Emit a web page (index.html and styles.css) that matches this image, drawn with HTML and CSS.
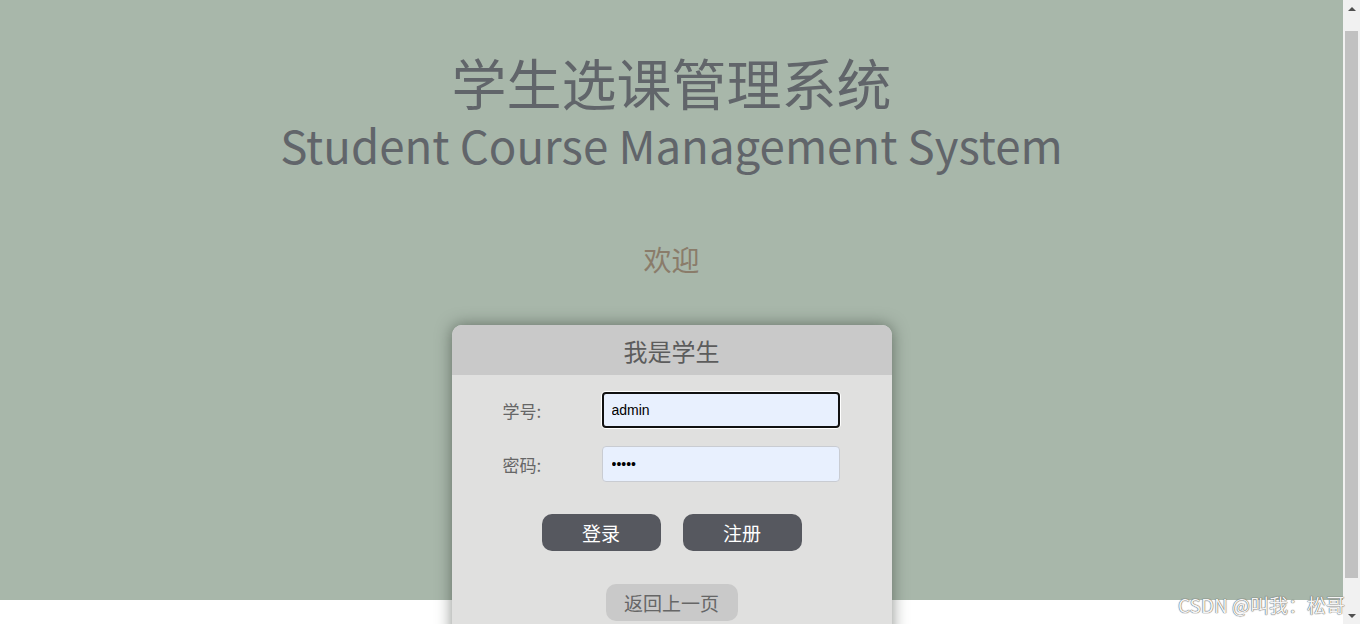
FILE: index.html
```html
<!DOCTYPE html>
<html>
  <head>
    <meta charset="utf-8">
    <link rel="stylesheet" href="styles.css">
  </head>
  <body>
    <div class="page">
      <div class="stage">
        <h1 class="title">
          <span class="title-cn">学生选课管理系统</span>
          <span class="title-en">Student Course Management System</span>
        </h1>
        <p class="welcome">欢迎</p>

        <div class="card">
          <div class="card-head">我是学生</div>
          <div class="card-body">
            <div class="row">
              <label class="label">学号:</label>
              <input class="field focused" type="text" value="admin">
            </div>
            <div class="row">
              <label class="label">密码:</label>
              <input class="field" type="password" value="admin">
            </div>
            <div class="actions">
              <button class="btn">登录</button>
              <button class="btn">注册</button>
            </div>
            <div class="back-row">
              <button class="back-btn">返回上一页</button>
            </div>
          </div>
        </div>
      </div>
    </div>

    <div class="scrollbar">
      <div class="sb-btn"><span class="arrow-up"></span></div>
      <div class="sb-track"><div class="sb-thumb"></div></div>
      <div class="sb-btn"><span class="arrow-down"></span></div>
    </div>

    <div class="watermark">CSDN @叫我：松哥</div>
  </body>
</html>
```

FILE: styles.css
```css
body {
  margin: 0;
  padding: 0;
  height: 624px;
  overflow: hidden;
  display: flex;
  position: relative;
  font-family: "Noto Sans CJK SC", "Noto Sans", sans-serif;
  background: #fff;
}

.page {
  flex: 1;
  background: #fff;
}

.stage {
  height: 600px;
  background: #a8b7aa;
  text-align: center;
  padding-top: 47px;
  box-sizing: border-box;
}

.title {
  margin: 0;
  font-weight: normal;
  color: #61656a;
}

.title-cn {
  display: block;
  font-size: 55px;
  line-height: 68px;
}

.title-en {
  display: block;
  font-size: 45.6px;
  line-height: 58px;
}

.welcome {
  margin: 66px 0 0;
  font-size: 28px;
  line-height: 40px;
  color: #8a7c6a;
}

.card {
  width: 440px;
  margin: 46px auto 0;
  border-radius: 10px;
  overflow: hidden;
  background: #e0e0df;
  box-shadow: 0 0 16px rgba(40, 50, 40, 0.55);
}

.card-head {
  height: 50px;
  line-height: 52px;
  background: #c9c9c9;
  color: #5c5c5c;
  font-size: 24px;
}

.card-body {
  padding: 17px 0 30px;
}

.row {
  display: flex;
  align-items: center;
  padding-left: 51px;
  margin-bottom: 18px;
}

.label {
  width: 99px;
  text-align: left;
  font-size: 17px;
  color: #666;
}

.field {
  width: 238px;
  height: 36px;
  box-sizing: border-box;
  padding: 0 9px;
  border: 1px solid #c9ccd2;
  border-radius: 4px;
  background: #e8f0fe;
  font-family: "Liberation Sans", Arial, sans-serif;
  font-size: 14px;
  color: #000;
  outline: none;
}

.field.focused {
  border: 2px solid #111;
  padding: 0 8px;
  box-shadow: 0 0 0 1px #fff;
}

.actions {
  display: flex;
  justify-content: center;
  gap: 22px;
  margin-top: 32px;
}

.btn {
  width: 119px;
  height: 37px;
  border: none;
  border-radius: 10px;
  background: #56585f;
  color: #fff;
  font-family: "Noto Sans CJK SC", sans-serif;
  font-size: 19px;
  cursor: pointer;
}

.back-row {
  display: flex;
  justify-content: center;
  margin-top: 33px;
}

.back-btn {
  width: 132px;
  height: 37px;
  border: none;
  border-radius: 10px;
  background: #c9c9c9;
  color: #666;
  font-family: "Noto Sans CJK SC", sans-serif;
  font-size: 19px;
  cursor: pointer;
}

.scrollbar {
  width: 17px;
  display: flex;
  flex-direction: column;
  background: #f1f1f1;
}

.sb-btn {
  height: 17px;
  display: flex;
  justify-content: center;
  align-items: center;
}

.arrow-up {
  border-left: 4px solid transparent;
  border-right: 4px solid transparent;
  border-bottom: 4px solid #505050;
}

.arrow-down {
  border-left: 4px solid transparent;
  border-right: 4px solid transparent;
  border-top: 4px solid #505050;
}

.sb-track {
  flex: 1;
  display: flex;
}

.sb-thumb {
  flex: 1;
  margin: 14px 2px 29px;
  background: #c1c1c1;
}

.watermark {
  position: absolute;
  right: 15px;
  bottom: 6px;
  font-size: 19px;
  color: #f4f4f4;
  text-shadow: 0 0 1px #555, 0 0 1px #555;
}
```
